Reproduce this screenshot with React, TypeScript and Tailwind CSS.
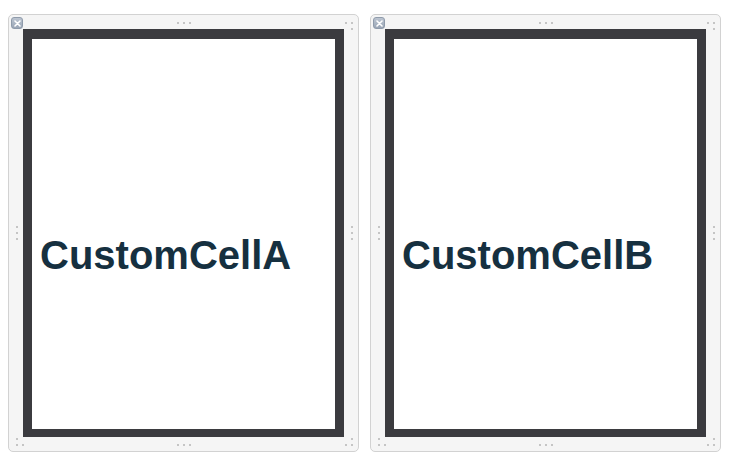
import React from 'react'

// small grey handle dot; `off` leaves the grid slot empty
function Dot({ off }: { off?: boolean }) {
  return <span className={`w-[2px] h-[2px] rounded-full ${off ? '' : 'bg-[#b4b4b4]'}`} />
}

// three dots in a row or column
function EdgeHandle({ vertical }: { vertical?: boolean }) {
  return (
    <div className={`flex gap-[4px] ${vertical ? 'flex-col' : ''}`}>
      <Dot />
      <Dot />
      <Dot />
    </div>
  )
}

// L-shaped corner grip, `skip` is the index of the empty slot (0 tl, 1 tr, 2 bl, 3 br)
function CornerHandle({ skip }: { skip: number }) {
  return (
    <div className="grid grid-cols-[2px_2px] grid-rows-[2px_2px] gap-[4px]">
      {[0, 1, 2, 3].map(i => <Dot key={i} off={i === skip} />)}
    </div>
  )
}

function CloseButton() {
  return (
    <span className="w-[12px] h-[12px] rounded-[3px] bg-gradient-to-b from-[#bcc5d1] to-[#9aa6b6] border border-[#8f9bab] flex items-center justify-center">
      <svg width="7" height="7" viewBox="0 0 7 7">
        <path d="M1 1 L6 6 M6 1 L1 6" stroke="#ffffff" strokeWidth="1.6" strokeLinecap="round" />
      </svg>
    </span>
  )
}

function CellPanel({ label }: { label: string }) {
  return (
    <div className="w-[351px] h-[438px] rounded-[5px] border border-[#d2d2d2] bg-[#f5f5f5] grid grid-cols-[14px_1fr_14px] grid-rows-[14px_1fr_14px]">
      {/* top row */}
      <div className="pl-[2px] pt-[2px]">
        <CloseButton />
      </div>
      <div className="flex justify-center pt-[7px]">
        <EdgeHandle />
      </div>
      <div className="pl-[1px] pt-[7px]">
        <CornerHandle skip={2} />
      </div>

      {/* middle row */}
      <div className="flex items-center pl-[7px]">
        <EdgeHandle vertical />
      </div>
      <div className="bg-[#3b3b3f] pt-[10px] pl-[9px] pr-[9px] pb-[8px]">
        <div className="h-full bg-white flex items-center pl-[8px] pt-[42px]">
          <span className="font-['Liberation_Sans',Arial,sans-serif] font-bold text-[40px] leading-none text-[#163040]">
            {label}
          </span>
        </div>
      </div>
      <div className="flex items-center pl-[7px]">
        <EdgeHandle vertical />
      </div>

      {/* bottom row */}
      <div className="pl-[7px] pt-[1px]">
        <CornerHandle skip={1} />
      </div>
      <div className="flex justify-center pt-[7px]">
        <EdgeHandle />
      </div>
      <div className="pl-[1px] pt-[1px]">
        <CornerHandle skip={0} />
      </div>
    </div>
  )
}

export default function App() {
  return (
    <div className="w-[732px] h-[466px] bg-white flex gap-[11px] pl-[8px] pt-[14px]">
      <CellPanel label="CustomCellA" />
      <CellPanel label="CustomCellB" />
    </div>
  )
}
